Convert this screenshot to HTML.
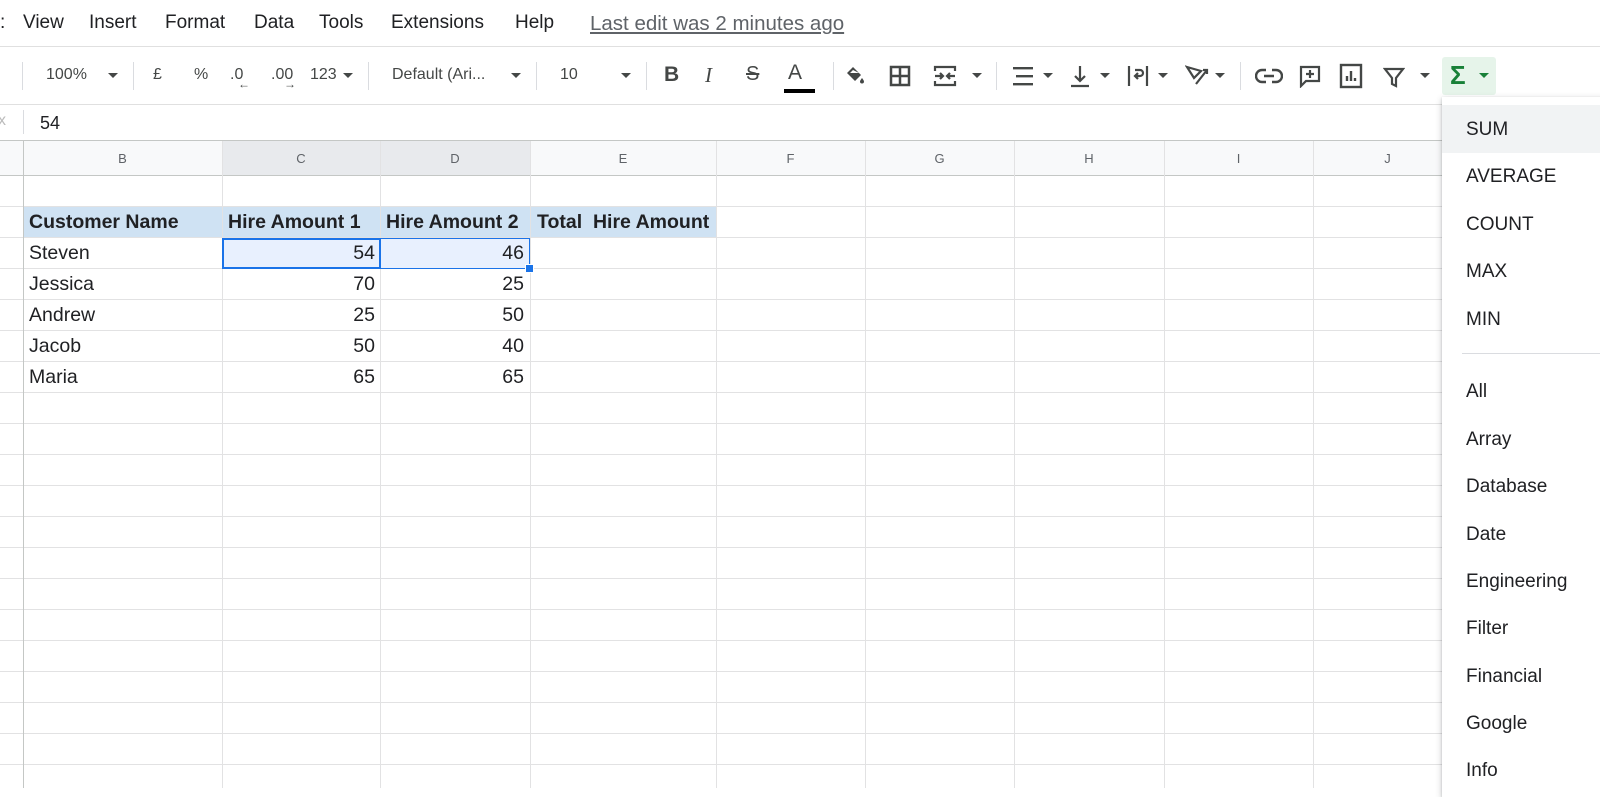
<!DOCTYPE html>
<html><head><style>
body{margin:0;width:1600px;height:788px;overflow:hidden;background:#fff;font-family:"Liberation Sans",Arial,sans-serif;position:relative;color:#202124}
.a{position:absolute;white-space:nowrap}
.menu span{position:absolute;top:12px;font-size:19px;color:#202124}
.tb{color:#444746;font-size:16px}
.sep{position:absolute;top:62px;width:1px;height:28px;background:#dadce0}
.caret{display:block;width:0;height:0;border-left:5px solid transparent;border-right:5px solid transparent;border-top:5px solid #444746}
.col{position:absolute;top:141px;width:1px;height:647px;background:#e2e2e3}
.hdr{position:absolute;top:141px;height:35px;line-height:35px;text-align:center;font-size:13px;color:#5f6368}
.c{position:absolute;height:31px;line-height:31px;font-size:19.5px}
.r{text-align:right}
.mi{position:absolute;left:1466px;font-size:19px;color:#202124}
</style></head><body>
<div class="menu a" style="top:0;left:0;width:1000px;height:46px">
<span style="left:0">:</span><span style="left:23px">View</span><span style="left:89px">Insert</span><span style="left:165px">Format</span><span style="left:254px">Data</span><span style="left:319px">Tools</span><span style="left:391px">Extensions</span><span style="left:515px">Help</span>
<span style="left:590px;color:#5f6368;text-decoration:underline;font-size:20.5px">Last edit was 2 minutes ago</span></div>
<div class="a" style="top:46px;left:0;width:1600px;height:1px;background:#e0e0e0"></div>
<!-- toolbar -->
<div class="a tb" style="top:66px;left:46px">100%</div><div class="a" style="top:73px;left:108px"><span class="caret"></span></div>
<div class="sep" style="left:133px"></div><div class="sep" style="left:22px"></div>
<div class="a tb" style="top:66px;left:153px">£</div>
<div class="a tb" style="top:66px;left:194px">%</div>
<div class="a tb" style="top:66px;left:230px">.0</div><div class="a tb" style="top:77px;left:238px;font-size:12px">←</div>
<div class="a tb" style="top:66px;left:271px">.00</div><div class="a tb" style="top:77px;left:284px;font-size:12px">→</div>
<div class="a tb" style="top:66px;left:310px">123</div><div class="a" style="top:73px;left:343px"><span class="caret"></span></div>
<div class="sep" style="left:368px"></div>
<div class="a tb" style="top:66px;left:392px">Default (Ari...</div><div class="a" style="top:73px;left:511px"><span class="caret"></span></div>
<div class="sep" style="left:536px"></div>
<div class="a tb" style="top:66px;left:560px">10</div><div class="a" style="top:73px;left:621px"><span class="caret"></span></div>
<div class="sep" style="left:646px"></div>
<div class="a tb" style="top:63px;left:664px;font-size:21px;font-weight:bold">B</div>
<div class="a tb" style="top:63px;left:705px;font-size:21px;font-style:italic;font-family:'Liberation Serif',serif">I</div>
<div class="a tb" style="top:63px;left:746px;font-size:20px;text-decoration:line-through">S</div>
<div class="a tb" style="top:61px;left:788px;font-size:21px">A</div>
<div class="a" style="top:89px;left:784px;width:31px;height:4px;background:#000"></div>
<div class="sep" style="left:833px"></div>
<svg class="a" style="top:64px;left:843px" width="24" height="24" viewBox="0 0 24 24" fill="#444746"><path d="M10 3l8 8-6 6-8-8 6-6zm0 3L7 9h9zM19 14s2 2.5 2 3.5a2 2 0 0 1-4 0c0-1 2-3.5 2-3.5z"/></svg>
<svg class="a" style="top:65px;left:889px" width="22" height="22" viewBox="0 0 22 22" fill="none" stroke="#444746" stroke-width="2.5"><rect x="2" y="2" width="18" height="18"/><path d="M11 2v18M2 11h18"/></svg>
<svg class="a" style="top:65px;left:933px" width="24" height="22" viewBox="0 0 24 22" fill="none" stroke="#444746" stroke-width="2.2"><path d="M2 6V2h20v4M2 16v4h20v-4M2 11h7M15 11h7M7 8l3 3-3 3M17 8l-3 3 3 3"/></svg>
<div class="a" style="top:73px;left:972px"><span class="caret"></span></div>
<div class="sep" style="left:996px"></div>
<svg class="a" style="top:66px;left:1012px" width="22" height="20" viewBox="0 0 22 20" fill="#444746"><rect x="1" y="1" width="20" height="2.4"/><rect x="4" y="9" width="17" height="2.4"/><rect x="1" y="17" width="20" height="2.4"/></svg>
<div class="a" style="top:73px;left:1043px"><span class="caret"></span></div>
<svg class="a" style="top:64px;left:1070px" width="20" height="24" viewBox="0 0 20 24" fill="none" stroke="#444746" stroke-width="2.2"><path d="M10 2v15M5 12l5 5 5-5M1 22h18"/></svg>
<div class="a" style="top:73px;left:1100px"><span class="caret"></span></div>
<svg class="a" style="top:64px;left:1127px" width="22" height="24" viewBox="0 0 22 24" fill="none" stroke="#444746" stroke-width="2.2"><path d="M2 2v20M20 2v20M8 6h5a3 3 0 0 1 0 6H9M11 9l-3 3 3 3"/></svg>
<div class="a" style="top:73px;left:1158px"><span class="caret"></span></div>
<svg class="a" style="top:64px;left:1185px" width="26" height="24" viewBox="0 0 26 24" fill="none" stroke="#444746" stroke-width="2.2"><path d="M2 3l14 4-7 7zM11 20l11-14M18 6h4v4"/></svg>
<div class="a" style="top:73px;left:1215px"><span class="caret"></span></div>
<div class="sep" style="left:1240px"></div>
<svg class="a" style="top:66px;left:1255px" width="28" height="20" viewBox="0 0 28 20" fill="none" stroke="#444746" stroke-width="2.4"><path d="M11 4H7a6 6 0 0 0 0 12h4M17 4h4a6 6 0 0 1 0 12h-4M9 10h10"/></svg>
<svg class="a" style="top:64px;left:1298px" width="24" height="24" viewBox="0 0 24 24" fill="none" stroke="#444746" stroke-width="2.2"><path d="M3 3h18v14H8l-5 5zM12 6v8M8 10h8"/></svg>
<svg class="a" style="top:63px;left:1339px" width="24" height="26" viewBox="0 0 24 26" fill="none" stroke="#444746" stroke-width="2.4"><rect x="2" y="2" width="20" height="22"/><path d="M8 18v-5M12 18V8M16 18v-3"/></svg>
<svg class="a" style="top:66px;left:1383px" width="22" height="22" viewBox="0 0 22 22" fill="none" stroke="#444746" stroke-width="2.2"><path d="M2 3h18l-7 9v8l-4-2v-6z"/></svg>
<div class="a" style="top:73px;left:1420px"><span class="caret"></span></div>
<div class="a" style="top:57px;left:1442px;width:54px;height:38px;background:#e6f4ea;border-radius:3px"></div>
<div class="a" style="top:60px;left:1450px;font-size:26px;color:#188038;font-weight:bold">Σ</div>
<div class="a" style="top:73px;left:1479px"><span class="caret" style="border-top-color:#188038"></span></div>
<div class="a" style="top:104px;left:0;width:1600px;height:1px;background:#e0e0e0"></div>
<!-- formula bar -->
<div class="a" style="top:112px;left:-2px;color:#bbb;font-size:16px">x</div>
<div class="a" style="top:110px;left:23px;width:1px;height:24px;background:#dadce0"></div>
<div class="a" style="top:113px;left:40px;font-size:18px">54</div>
<div class="a" style="top:140px;left:0;width:1600px;height:1px;background:#c4c7c5"></div>
<!-- col headers -->
<div class="a" style="top:141px;left:0;width:1600px;height:35px;background:#f8f9fa"></div>
<div class="a" style="top:141px;left:222px;width:308px;height:35px;background:#e8eaed"></div>
<div class="a" style="top:175px;left:0;width:1600px;height:1px;background:#c4c7c5"></div>
<!-- grid rows -->
<div class="a" style="top:176px;left:0;width:1600px;height:612px;background:repeating-linear-gradient(to bottom,transparent 0,transparent 30px,#e2e2e3 30px,#e2e2e3 31px)"></div>
<!-- header fill -->
<div class="a" style="top:207px;left:23px;width:693px;height:30px;background:#cfe2f3"></div>
<div class="a" style="top:238px;left:222px;width:308px;height:30px;background:#e8f0fe"></div>
<div class="col" style="left:23px;background:#c4c7c5"></div>
<div class="col" style="left:222px"></div><div class="col" style="left:380px"></div><div class="col" style="left:530px"></div><div class="col" style="left:716px"></div><div class="col" style="left:865px"></div><div class="col" style="left:1014px"></div><div class="col" style="left:1164px"></div><div class="col" style="left:1313px"></div>
<div class="hdr" style="left:23px;width:199px">B</div><div class="hdr" style="left:222px;width:158px">C</div><div class="hdr" style="left:380px;width:150px">D</div><div class="hdr" style="left:530px;width:186px">E</div><div class="hdr" style="left:716px;width:149px">F</div><div class="hdr" style="left:865px;width:149px">G</div><div class="hdr" style="left:1014px;width:150px">H</div><div class="hdr" style="left:1164px;width:149px">I</div><div class="hdr" style="left:1313px;width:149px">J</div>
<!-- selection -->
<div class="a" style="top:238px;left:222px;width:306px;height:29px;border:1px solid #1a73e8"></div>
<div class="a" style="top:238px;left:222px;width:155px;height:27px;border:2px solid #1a73e8"></div>
<div class="a" style="top:264px;left:525px;width:7px;height:7px;background:#1a73e8;border:1px solid #fff"></div>
<!-- cells -->
<div class="c" style="top:207px;left:29px;font-weight:bold">Customer Name</div>
<div class="c" style="top:207px;left:228px;font-weight:bold">Hire Amount 1</div>
<div class="c" style="top:207px;left:386px;font-weight:bold">Hire Amount 2</div>
<div class="c" style="top:207px;left:537px;font-weight:bold">Total&nbsp; Hire Amount</div>
<div class="c" style="top:238px;left:29px">Steven</div><div class="c r" style="top:238px;left:222px;width:153px">54</div><div class="c r" style="top:238px;left:380px;width:144px">46</div>
<div class="c" style="top:269px;left:29px">Jessica</div><div class="c r" style="top:269px;left:222px;width:153px">70</div><div class="c r" style="top:269px;left:380px;width:144px">25</div>
<div class="c" style="top:300px;left:29px">Andrew</div><div class="c r" style="top:300px;left:222px;width:153px">25</div><div class="c r" style="top:300px;left:380px;width:144px">50</div>
<div class="c" style="top:331px;left:29px">Jacob</div><div class="c r" style="top:331px;left:222px;width:153px">50</div><div class="c r" style="top:331px;left:380px;width:144px">40</div>
<div class="c" style="top:362px;left:29px">Maria</div><div class="c r" style="top:362px;left:222px;width:153px">65</div><div class="c r" style="top:362px;left:380px;width:144px">65</div>
<!-- dropdown -->
<div class="a" style="top:97px;left:1442px;width:170px;height:700px;background:#fff;box-shadow:0 2px 6px rgba(60,64,67,.3),0 1px 2px rgba(60,64,67,.2)"></div>
<div class="a" style="top:105px;left:1442px;width:158px;height:48px;background:#f1f3f4"></div>
<div class="mi" style="top:119px">SUM</div>
<div class="mi" style="top:166px">AVERAGE</div>
<div class="mi" style="top:214px">COUNT</div>
<div class="mi" style="top:261px">MAX</div>
<div class="mi" style="top:309px">MIN</div>
<div class="a" style="top:353px;left:1462px;width:140px;height:1px;background:#dadce0"></div>
<div class="mi" style="top:381px">All</div>
<div class="mi" style="top:429px">Array</div>
<div class="mi" style="top:476px">Database</div>
<div class="mi" style="top:524px">Date</div>
<div class="mi" style="top:571px">Engineering</div>
<div class="mi" style="top:618px">Filter</div>
<div class="mi" style="top:666px">Financial</div>
<div class="mi" style="top:713px">Google</div>
<div class="mi" style="top:760px">Info</div>
</body></html>
